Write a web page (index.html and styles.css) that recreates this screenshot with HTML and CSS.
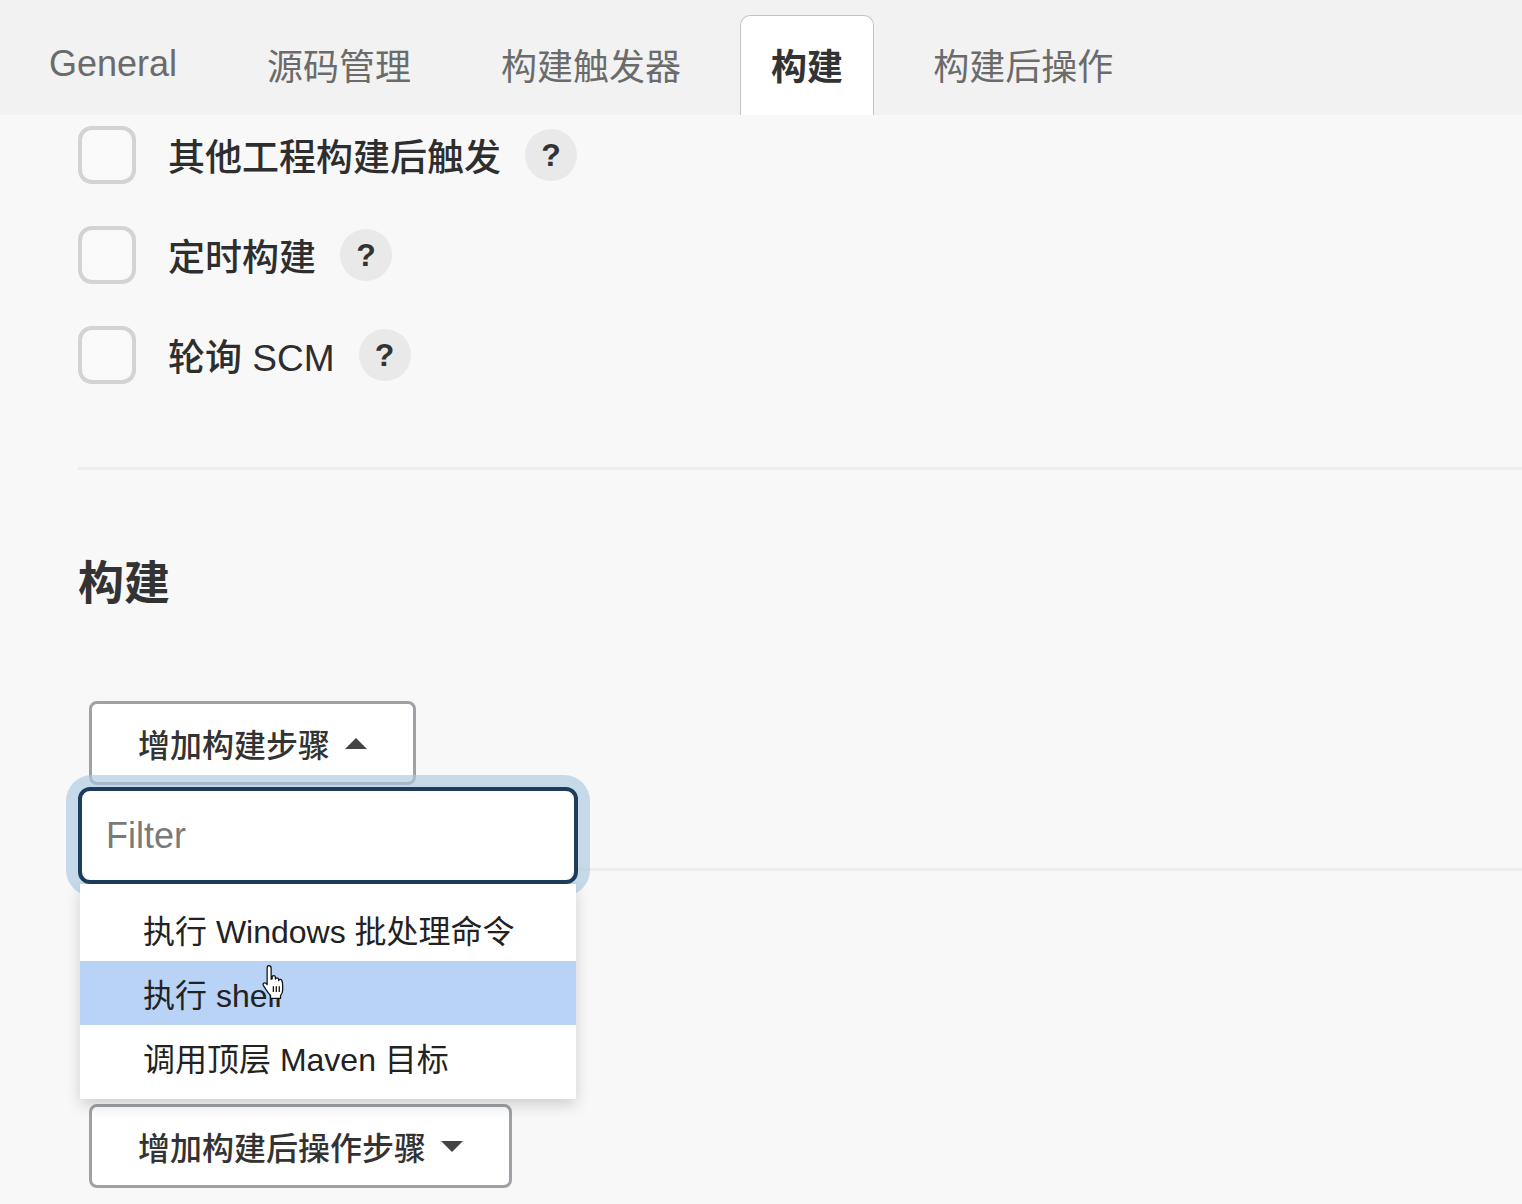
FILE: index.html
```html
<!DOCTYPE html>
<html lang="zh-CN">
<head>
<meta charset="utf-8">
<title>构建配置</title>
<link rel="stylesheet" href="styles.css">
</head>
<body>
<nav class="tabbar">
  <div class="tab">General</div>
  <div class="tab">源码管理</div>
  <div class="tab">构建触发器</div>
  <div class="tab tab-active">构建</div>
  <div class="tab">构建后操作</div>
</nav>
<main class="content">
  <div class="checks">
    <div class="check-row">
      <span class="checkbox"></span>
      <span class="check-label">其他工程构建后触发</span>
      <span class="help">?</span>
    </div>
    <div class="check-row">
      <span class="checkbox"></span>
      <span class="check-label">定时构建</span>
      <span class="help">?</span>
    </div>
    <div class="check-row">
      <span class="checkbox"></span>
      <span class="check-label">轮询 SCM</span>
      <span class="help">?</span>
    </div>
  </div>
  <hr class="rule rule-first">
  <h2 class="section-title">构建</h2>
  <div class="btn-wrap">
    <button class="btn btn-build">增加构建步骤<span class="tri tri-up"></span></button>
    <div class="dropdown">
      <div class="filter-ring">
        <div class="filter">Filter</div>
      </div>
      <ul class="menu">
        <li class="menu-item">执行 Windows 批处理命令</li>
        <li class="menu-item menu-item-hover">执行 shell
          <svg class="cursor" width="28" height="38" viewBox="0 0 26 36">
            <path d="M8 2.5c1.4 0 2.3 1 2.3 2.3v10.5l1-.3V13c0-1.3 2.6-1.6 3 0v2.2c.3-1.5 2.8-1.5 3.1 0v1.4c.3-1.4 2.8-1.4 3 .1 .6 1 .8 2.6.8 4.3v4.8c0 2.2-.8 3.6-2 5.2v2.5H9.7v-2.7c-1.5-1.5-3-3.6-4.4-5.8L3 21.5c-.8-1.3-.2-2.5 1-2.6 1-.1 1.7.5 2.5 1.6V4.8C6.5 3.5 6.8 2.5 8 2.5z" fill="#fff" stroke="#111" stroke-width="1.2" stroke-linejoin="round"/>
            <path d="M12.4 22v5.5M15.2 22v5.5M18 22v5.5" stroke="#111" stroke-width="1.2"/>
          </svg>
        </li>
        <li class="menu-item">调用顶层 Maven 目标</li>
      </ul>
    </div>
  </div>
  <hr class="rule rule-second">
  <button class="btn btn-post">增加构建后操作步骤<span class="tri tri-down"></span></button>
</main>
</body>
</html>
```

FILE: styles.css
```css
* { box-sizing: border-box; }

html, body {
  margin: 0;
  padding: 0;
}

body {
  background: #f8f8f8;
  font-family: "Liberation Sans", "Noto Sans CJK SC", sans-serif;
  color: #333;
  width: 1522px;
  height: 1204px;
  overflow: hidden;
}

.tabbar {
  display: flex;
  align-items: flex-end;
  gap: 28px;
  height: 115px;
  padding-left: 18px;
  background: #f2f2f2;
}

.tab {
  height: 100px;
  padding: 0 30px 4px;
  display: flex;
  align-items: center;
  font-size: 36px;
  color: #6b6b6b;
  border: 1.5px solid transparent;
  border-bottom: none;
}

.tab-active {
  background: #fff;
  border-color: #c4c4c4;
  border-radius: 10px 10px 0 0;
  color: #333;
  font-weight: 700;
}

.content {
  padding-left: 78px;
}

.checks {
  display: flex;
  flex-direction: column;
  gap: 20px;
}

.check-row {
  height: 80px;
  display: flex;
  align-items: center;
}

.checkbox {
  width: 58px;
  height: 58px;
  border: 4px solid #d3d3d3;
  border-radius: 14px;
  background: #f9f9f9;
  flex: none;
}

.check-label {
  margin-left: 32px;
  font-size: 37px;
  font-weight: 500;
  color: #2e2e2e;
}

.help {
  width: 52px;
  height: 52px;
  border-radius: 50%;
  background: #e9e9e9;
  margin-left: 24px;
  display: flex;
  align-items: center;
  justify-content: center;
  font-size: 32px;
  font-weight: 600;
  color: #333;
}

.rule {
  border: none;
  border-top: 3px solid #ededed;
  margin: 0;
}

.rule-first {
  margin-top: 72px;
}

.section-title {
  margin: 86px 0 0;
  font-size: 46px;
  line-height: 55px;
  font-weight: 700;
  color: #333;
}

.btn-wrap {
  position: relative;
  margin-top: 90px;
  margin-left: 11px;
  width: fit-content;
}

.btn {
  display: inline-flex;
  align-items: center;
  gap: 15px;
  height: 84px;
  padding: 0 46px;
  background: #fff;
  border: 3px solid #9ea2a6;
  border-radius: 8px;
  font-family: "Liberation Sans", "Noto Sans CJK SC", sans-serif;
  font-size: 32px;
  font-weight: 500;
  color: #333;
}

.btn-post {
  margin-left: 11px;
  margin-top: 233px;
}

.tri {
  width: 0;
  height: 0;
  border-left: 11px solid transparent;
  border-right: 11px solid transparent;
}

.tri-up {
  border-bottom: 11px solid #444;
}

.tri-down {
  border-top: 11px solid #444;
}

.rule-second {
  margin-top: 83px;
}

.dropdown {
  position: absolute;
  top: 86px;
  left: -11px;
  width: 500px;
  z-index: 5;
}

.filter-ring {
  border-radius: 14px;
  box-shadow: 0 0 0 12px rgba(170, 200, 222, 0.65);
}

.filter {
  height: 97px;
  border: 4px solid #1e3d5c;
  border-radius: 12px;
  background: #fff;
  display: flex;
  align-items: center;
  padding-left: 24px;
  font-size: 36px;
  color: #7a7a7a;
}

.menu {
  list-style: none;
  margin: 0 2px;
  padding: 13px 0 10px;
  background: #fff;
  box-shadow: 0 6px 14px rgba(0, 0, 0, 0.16);
}

.menu-item {
  position: relative;
  height: 64px;
  display: flex;
  align-items: center;
  padding-left: 63px;
  font-size: 32px;
  color: #222;
}

.menu-item-hover {
  background: #b9d3f7;
}

.cursor {
  position: absolute;
  left: 180px;
  top: 2px;
}
```
